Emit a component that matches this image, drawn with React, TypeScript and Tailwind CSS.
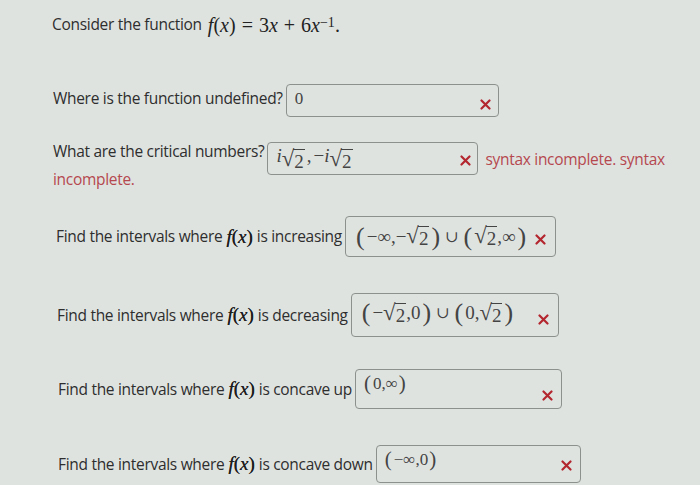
import React from 'react';

const mathFont = { fontFamily: '"Liberation Serif", "DejaVu Serif", serif' };

function Sqrt({ children }: { children: React.ReactNode }) {
  return (
    <span className="inline-flex items-end">
      <span className="not-italic leading-none text-[1.2em] -mr-[1px]">√</span>
      <span className="border-t border-[#444] leading-none pt-[2px] px-[1px] not-italic">{children}</span>
    </span>
  );
}

function Fx() {
  return (
    <span className="text-[19px] tracking-normal text-[#1e1e1e] mx-[4px] [text-shadow:0_0_0.4px_#1e1e1e]" style={mathFont}>
      <i>f</i>(<i>x</i>)
    </span>
  );
}

function X() {
  return (
    <svg width="11" height="11" viewBox="0 0 11 11" className="shrink-0">
      <path d="M1.5 1.5 L9.5 9.5 M9.5 1.5 L1.5 9.5" stroke="#b3262e" strokeWidth="2.2" strokeLinecap="round" />
    </svg>
  );
}

function Box({
  w,
  h,
  children,
  xPad = 'pr-3',
  xMb = 'mb-[9px]',
}: {
  w: string;
  h: string;
  children: React.ReactNode;
  xPad?: string;
  xMb?: string;
}) {
  return (
    <div className={`${w} ${h} ${xPad} ml-[3px] shrink-0 tracking-normal border border-[#8d918e] rounded-[4px] flex items-center justify-between pl-2`}>
      <div className="flex items-center text-[#444]" style={mathFont}>
        {children}
      </div>
      <div className={`self-end ${xMb}`}>
        <X />
      </div>
    </div>
  );
}

function Paren({ c }: { c: string }) {
  return <span className="text-[26px] leading-none mx-[2px] font-light">{c}</span>;
}

export default function App() {
  return (
    <div
      className="w-[700px] h-[485px] overflow-hidden bg-[#dfe3e0] text-[#2e2e2e] text-[15.5px] tracking-[-0.3px]"
      style={{ fontFamily: '"Open Sans", "Noto Sans", sans-serif' }}
    >
      {/* intro */}
      <div className="pl-[52px] pt-[10px] flex items-center">
        <span>Consider the function</span>
        <span className="ml-[6px] text-[20px] tracking-normal text-[#222]" style={mathFont}>
          <i>f</i>(<i>x</i>)<span className="mx-[6px]">=</span>3<i>x</i>
          <span className="mx-[6px]">+</span>6<i>x</i>
          <sup className="text-[14px] relative -top-[5px]">−1</sup>.
        </span>
      </div>

      {/* undefined */}
      <div className="pl-[53px] mt-[44px] flex items-center">
        <span className="-mt-[4px]">Where is the function undefined?</span>
        <Box w="w-[213px]" h="h-[33px]" xPad="pr-[7px]" xMb="mb-[6px]">
          <span className="text-[17px] -mt-[4px]">0</span>
        </Box>
      </div>

      {/* critical numbers */}
      <div className="pl-[53px] mt-[25px]">
        <div className="flex items-start">
          <span className="mt-[-2px]">What are the critical numbers?</span>
          <Box w="w-[211px]" h="h-[33px]" xPad="pr-[6px]" xMb="mb-[8px]">
            <span className="text-[19px] flex items-end -mt-[4px]">
              <i>i</i>
              <Sqrt>2</Sqrt>
              <span className="mx-[2px]">,</span>−<i>i</i>
              <Sqrt>2</Sqrt>
            </span>
          </Box>
          <span className="ml-[7px] text-[#b5484f] mt-[6px]">syntax incomplete. syntax</span>
        </div>
        <div className="text-[#b5484f] -mt-[7px]">incomplete.</div>
      </div>

      {/* increasing */}
      <div className="pl-[56px] mt-[25px] flex items-center">
        <span>Find the intervals where</span>
        <Fx />
        <span>is increasing</span>
        <Box w="w-[211px]" h="h-[41px]" xPad="pr-[9px]" xMb="mb-[11px]">
          <span className="text-[19px] flex items-center">
            <Paren c="(" />−∞,−<Sqrt>2</Sqrt>
            <Paren c=")" />
            <span className="mx-[3px] text-[16px]">∪</span>
            <Paren c="(" />
            <Sqrt>2</Sqrt>,∞<Paren c=")" />
          </span>
        </Box>
      </div>

      {/* decreasing */}
      <div className="pl-[57px] mt-[36px] flex items-center">
        <span>Find the intervals where</span>
        <Fx />
        <span>is decreasing</span>
        <Box w="w-[208px]" h="h-[44px]" xPad="pr-[9px]" xMb="mb-[11px]">
          <span className="text-[19px] flex items-center -mt-[4px]">
            <Paren c="(" />−<Sqrt>2</Sqrt>,0
            <Paren c=")" />
            <span className="mx-[3px] text-[16px]">∪</span>
            <Paren c="(" />0,<Sqrt>2</Sqrt>
            <Paren c=")" />
          </span>
        </Box>
      </div>

      {/* concave up */}
      <div className="pl-[58px] mt-[32px] flex items-center">
        <span>Find the intervals where</span>
        <Fx />
        <span>is concave up</span>
        <Box w="w-[207px]" h="h-[40px]" xPad="pr-[8px]" xMb="mb-[7px]">
          <span className="text-[17px] flex items-center -mt-[12px]">
            <span className="text-[21px] leading-none mr-[2px]">(</span>0,∞
            <span className="text-[21px] leading-none ml-[1px]">)</span>
          </span>
        </Box>
      </div>

      {/* concave down */}
      <div className="pl-[58px] mt-[36px] flex items-center">
        <span>Find the intervals where</span>
        <Fx />
        <span>is concave down</span>
        <Box w="w-[205px]" h="h-[38px]" xPad="pr-[8px]" xMb="mb-[11px]">
          <span className="text-[17px] flex items-center -mt-[10px]">
            <span className="text-[21px] leading-none mr-[2px]">(</span>−∞,0
            <span className="text-[21px] leading-none ml-[1px]">)</span>
          </span>
        </Box>
      </div>
    </div>
  );
}
